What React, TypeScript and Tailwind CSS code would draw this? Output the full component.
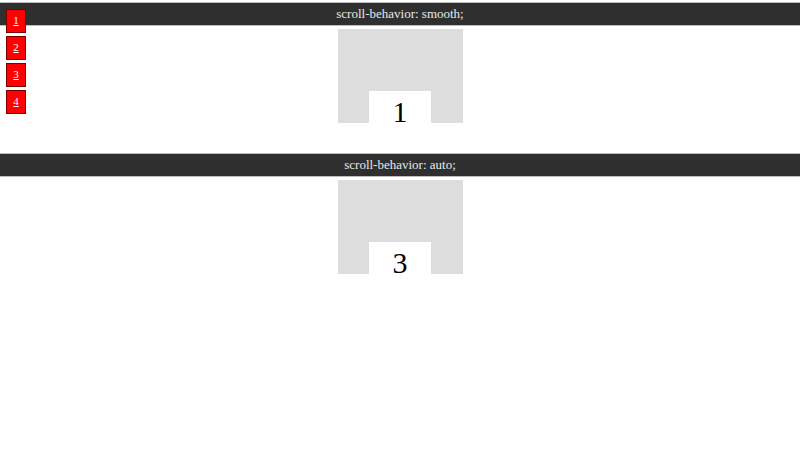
const LINKS = ['1', '2', '3', '4'];

const SECTIONS = [
  { label: 'scroll-behavior: smooth;', num: '1' },
  { label: 'scroll-behavior: auto;', num: '3' },
];

function Section({ label, num }: { label: string; num: string }) {
  return (
    <section className="h-[151px]">
      <div className="flex h-[24px] items-center justify-center border-y border-[#bdbdbd] bg-[#2f2f2f] text-[13px] text-[#e8e8e8]">
        {label}
      </div>
      <div className="mt-[3px] h-[94px] overflow-hidden">
        <div className="mx-auto h-[200px] w-[125px] bg-[#dddddd] pt-[62px]">
          <div className="mx-auto h-[120px] w-[62px] bg-white pt-[4px] text-center text-[30px] leading-[34px] text-black">
            {num}
          </div>
        </div>
      </div>
    </section>
  );
}

export default function App() {
  return (
    <div className="relative h-[450px] w-[800px] overflow-hidden bg-white pt-[2px] font-['Liberation_Serif',serif]">
      {SECTIONS.map((s) => (
        <Section key={s.label} label={s.label} num={s.num} />
      ))}

      <nav className="absolute left-[6px] top-[9px] flex flex-col gap-[3px]">
        {LINKS.map((n) => (
          <a
            key={n}
            href={`#s${n}`}
            className="flex h-[24px] w-[20px] justify-center border border-[#7a0000] bg-[#ff0000] pt-[4px] text-[11px] leading-[13px] text-white underline"
          >
            {n}
          </a>
        ))}
      </nav>
    </div>
  );
}
